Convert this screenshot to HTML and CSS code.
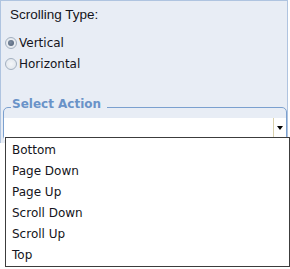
FILE: index.html
```html
<!DOCTYPE html>
<html lang="en">
<head>
  <meta charset="UTF-8">
  <meta name="viewport" content="width=device-width, initial-scale=1.0">
  <title>Scrolling Options</title>
  <link rel="stylesheet" href="styles.css">
</head>
<body>
  <div class="panel">
    <div class="title">Scrolling Type:</div>
    <label class="option"><span class="radio checked"></span>Vertical</label>
    <label class="option"><span class="radio"></span>Horizontal</label>

    <fieldset class="action">
      <legend>Select Action</legend>
      <div class="select">
        <span class="select-value"></span>
        <span class="select-btn"><span class="arrow"></span></span>
      </div>
    </fieldset>
  </div>

  <!-- open dropdown list of the select -->
  <ul class="dropdown">
    <li>Bottom</li>
    <li>Page Down</li>
    <li>Page Up</li>
    <li>Scroll Down</li>
    <li>Scroll Up</li>
    <li>Top</li>
  </ul>
</body>
</html>
```

FILE: styles.css
```css
body {
  margin: 0;
  background-color: #fff;
  font-family: "DejaVu Sans", sans-serif;
  font-size: 12px;
  color: #141420;
}
.panel {
  width: 286px;
  height: 142px;
  border: 1px solid #afc4e0;
  border-bottom: none;
  background-color: #e8edf5;
  overflow: hidden;
}
.title {
  font-family: "Liberation Sans", sans-serif;
  font-size: 13.5px;
  line-height: 16px;
  padding: 6px 0 0 9px;
  margin-bottom: 9px;
}
.option {
  display: flex;
  align-items: center;
  height: 21px;
  padding-left: 4px;
}
.radio {
  width: 10px;
  height: 10px;
  margin-right: 2px;
  border: 1px solid #a3b0c0;
  border-radius: 50%;
  background: radial-gradient(circle, #f4f6f9 0%, #dde3ea 100%);
  display: flex;
  align-items: center;
  justify-content: center;
}
.radio.checked::after {
  content: "";
  width: 6px;
  height: 6px;
  border-radius: 50%;
  background: radial-gradient(circle at 40% 40%, #7c8ba0 0%, #4f5f76 100%);
}
.action {
  box-sizing: border-box;
  width: 284px;
  min-width: 0;
  margin: 23px 0 0 2px;
  padding: 0;
  border: 1px solid #7ba0cf;
  border-radius: 5px;
}
.action legend {
  margin-left: 7px;
  padding: 0 6px 6px 1px;
  line-height: 14px;
  font-weight: bold;
  color: #6a93c8;
}
.select {
  display: flex;
  height: 22px;
  margin-top: 1px;
  background-color: #fff;
}
.select-value {
  flex: 1;
  border-right: 1px solid #d8d0ac;
}
.select-btn {
  width: 12px;
  display: flex;
  align-items: center;
  justify-content: center;
}
.arrow {
  width: 0;
  height: 0;
  margin-bottom: 2px;
  border-top: 4px solid #000;
  border-left: 3.5px solid transparent;
  border-right: 3.5px solid transparent;
}
.dropdown {
  position: absolute;
  top: 137px;
  left: 5px;
  box-sizing: border-box;
  width: 285px;
  margin: 0;
  padding: 2px 0 0;
  list-style: none;
  background-color: #fff;
  border: 1px solid #3c3c3c;
}
.dropdown li {
  line-height: 21px;
  padding-left: 6px;
}
```
